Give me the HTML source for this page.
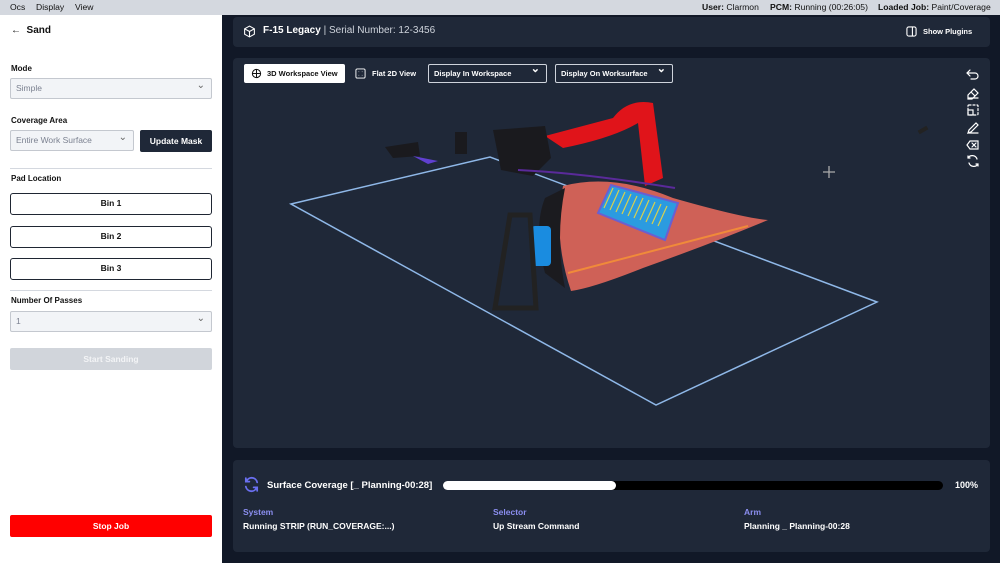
<!DOCTYPE html>
<html><head><meta charset="utf-8"><style>
*{box-sizing:border-box;margin:0;padding:0}
body{width:1000px;height:563px;overflow:hidden;font-family:"Liberation Sans",sans-serif;background:#111827;position:relative}
.top{position:absolute;left:0;top:0;width:1000px;height:15px;background:#d4d8df;font-size:8.6px;color:#111;line-height:15px}
.top span{position:absolute}
.left{position:absolute;left:0;top:15px;width:222px;height:548px;background:#fff}
.lbl{position:absolute;left:11px;font-size:8px;font-weight:bold;color:#111}
.sel{position:absolute;left:10px;height:21px;border:1px solid #c4c8cf;background:#f2f4f7;border-radius:2px;font-size:8.5px;color:#7b8190;line-height:19px;padding-left:5px}
.sel:after{content:"⌄";position:absolute;right:6px;top:-3px;font-size:10px;color:#666}
.bin{position:absolute;left:10px;width:202px;height:22px;border:1.5px solid #1f2633;border-radius:3px;font-size:8.5px;font-weight:bold;text-align:center;line-height:19px;color:#111}
.hr{position:absolute;left:10px;width:202px;height:1px;background:#d4d8df}
.card{position:absolute;background:#1f2838;border-radius:4px}
.w{color:#fff}
.dd{position:absolute;top:64px;height:19px;border:1px solid #cfd4dc;border-radius:2px;color:#fff;font-size:7.5px;font-weight:bold;line-height:17px;padding-left:5px}
.dd:after{content:"⌄";position:absolute;right:6px;top:-4px;font-size:11px}
.k{position:absolute;font-size:8.5px;font-weight:bold;color:#8b8ef0}
.v{position:absolute;font-size:8.5px;font-weight:bold;color:#fff}
</style></head><body>
<div class="top"><span style="left:10px">Ocs</span><span style="left:36px">Display</span><span style="left:75px">View</span>
<span style="left:702px"><b>User:</b> Clarmon</span><span style="left:770px"><b>PCM:</b> Running (00:26:05)</span><span style="left:878px"><b>Loaded Job:</b> Paint/Coverage</span></div>
<div class="left">
<div style="position:absolute;left:11px;top:10px;font-size:10px;font-weight:bold;color:#111">←&nbsp;&nbsp;Sand</div>
<div class="lbl" style="top:49px">Mode</div>
<div class="sel" style="top:63px;width:202px">Simple</div>
<div class="lbl" style="top:101px">Coverage Area</div>
<div class="sel" style="top:115px;width:124px">Entire Work Surface</div>
<div style="position:absolute;left:140px;top:115px;width:72px;height:22px;background:#1f2838;border-radius:2px;color:#fff;font-size:8.5px;font-weight:bold;text-align:center;line-height:22px">Update Mask</div>
<div class="hr" style="top:153px"></div>
<div class="lbl" style="top:159px">Pad Location</div>
<div class="bin" style="top:178px">Bin 1</div>
<div class="bin" style="top:211px">Bin 2</div>
<div class="bin" style="top:243px">Bin 3</div>
<div class="hr" style="top:275px"></div>
<div class="lbl" style="top:281px">Number Of Passes</div>
<div class="sel" style="top:296px;width:202px">1</div>
<div style="position:absolute;left:10px;top:333px;width:202px;height:22px;background:#d1d5db;border-radius:2px;color:#f3f4f6;font-size:8.5px;font-weight:bold;text-align:center;line-height:22px">Start Sanding</div>
<div style="position:absolute;left:10px;top:500px;width:202px;height:22px;background:#ff0000;border-radius:2px;color:#fff;font-size:8.5px;font-weight:bold;text-align:center;line-height:22px">Stop Job</div>
</div>
<div class="card" style="left:233px;top:17px;width:757px;height:30px">
<svg style="position:absolute;left:10px;top:8px" width="13" height="13" viewBox="0 0 24 24" fill="none" stroke="#fff" stroke-width="2"><path d="M12 2l9 5v10l-9 5-9-5V7z M3 7l9 5 9-5 M12 12v10"/></svg>
<div style="position:absolute;left:30px;top:8px;font-size:10px;color:#cfd4dc"><b class="w">F-15 Legacy</b> | Serial Number: 12-3456</div>
<svg style="position:absolute;left:673px;top:9px" width="11" height="11" viewBox="0 0 12 12" fill="none" stroke="#fff" stroke-width="1.2"><rect x="1" y="1" width="10" height="10" rx="2"/><path d="M7 1v10"/></svg>
<div style="position:absolute;left:690px;top:10px;font-size:7.5px;font-weight:bold;color:#fff">Show Plugins</div>
</div>
<div class="card" style="left:233px;top:58px;width:757px;height:390px"></div>
<svg style="position:absolute;left:233px;top:58px" width="757" height="390">
<polygon points="58,146 257,99 644,244 423,347" fill="none" stroke="#8fb8e8" stroke-width="1.5"/>
<path d="M380,60 Q395,40 420,45 L430,120 L412,128 L405,65 Q380,80 330,90 L312,78Z" fill="#e0141a"/>
<path d="M260,72 L312,68 L318,100 L300,118 L268,112Z" fill="#1a1a1e"/>
<path d="M285,112 Q350,115 442,130" stroke="#5a2a9a" stroke-width="2" fill="none"/>
<path d="M330,128 Q380,115 440,140 Q510,160 535,162 Q480,185 410,210 Q360,230 338,233 Q320,180 330,128Z" fill="#cf6157"/>
<path d="M335,215 L515,168" stroke="#f08a3a" stroke-width="2"/>
<polygon points="365,155 378,127 445,145 432,182" fill="#2b9be0" stroke="#6a5fd0" stroke-width="2"/>
<g stroke="#d6d050" stroke-width="1.2"><path d="M371,150L380,130M377,152L386,132M383,154L392,134M389,156L398,136M395,158L404,138M401,160L410,140M407,162L416,142M413,164L422,144M419,166L428,146M425,168L434,148"/></g>
<path d="M312,140 Q300,170 312,215 L332,230 Q322,180 332,130Z" fill="#1b1b1f"/>
<rect x="298" y="168" width="20" height="40" rx="4" fill="#1a8ce0"/>
<path d="M262,250 L277,157 L297,157 L303,250Z" fill="none" stroke="#222" stroke-width="5"/>
<path d="M152,89 L185,84 L187,98 L160,100Z" fill="#1a1a1e"/><path d="M180,98 L205,103 L195,106Z" fill="#6040d0"/>
<rect x="222" y="74" width="12" height="22" fill="#1a1a1e"/>
<rect x="685" y="70" width="10" height="4" fill="#222" transform="rotate(-30 690 72)"/>
<path d="M596,108v12M590,114h12" stroke="#aaa" stroke-width="1.3"/>
</svg>
<div style="position:absolute;left:244px;top:64px;width:101px;height:19px;background:#fff;border-radius:2px;font-size:7.5px;font-weight:bold;line-height:19px;padding-left:23px;color:#111">3D Workspace View</div>
<svg style="position:absolute;left:251px;top:68px" width="11" height="11" viewBox="0 0 24 24" fill="none" stroke="#111" stroke-width="2.2"><circle cx="12" cy="12" r="9"/><path d="M12 3v18M3 12h18"/></svg>
<svg style="position:absolute;left:355px;top:68px" width="11" height="11" viewBox="0 0 12 12" fill="none" stroke="#fff" stroke-width="1"><rect x="1" y="1" width="10" height="10" rx="1.5"/><path d="M4 4h.5M7.5 4h.5M4 8h.5M7.5 8h.5"/></svg>
<div style="position:absolute;left:372px;top:69px;font-size:7.5px;font-weight:bold;color:#fff">Flat 2D View</div>
<div class="dd" style="left:428px;width:119px">Display In Workspace</div>
<div class="dd" style="left:555px;width:118px">Display On Worksurface</div>
<svg style="position:absolute;left:966px;top:67px" width="14" height="104" viewBox="0 0 14 104" fill="none" stroke="#fff" stroke-width="1.2" stroke-linecap="round">
<path d="M4 3L1 6l3 3M1 6h8a3 3 0 010 6H5"/>
<path d="M2 28l6-6 4 4-6 6H2zM5 25l4 4M2 31h10"/>
<rect x="2" y="38" width="10" height="10" rx="1" stroke-dasharray="2 2"/><rect x="2" y="43" width="5" height="5"/>
<path d="M2 66l1-3 7-7 2 2-7 7zM2 66h10"/>
<path d="M4 74h8v8H4l-3-4z M6 76l4 4M10 76l-4 4"/>
<path d="M11 92a5 5 0 00-9-1M2 89v2h2M3 96a5 5 0 009 1M12 99v-2h-2"/>
</svg>
<div class="card" style="left:233px;top:460px;width:757px;height:92px">
<svg style="position:absolute;left:10px;top:16px" width="17" height="17" viewBox="0 0 24 24" fill="none" stroke="#6a6ff0" stroke-width="2.5" stroke-linecap="round"><path d="M20 9a8 8 0 00-15-2M4 3v5h5M4 15a8 8 0 0015 2M20 21v-5h-5"/></svg>
<div style="position:absolute;left:34px;top:20px;font-size:9.5px;font-weight:bold;color:#fff">Surface Coverage [_ Planning-00:28]</div>
<div style="position:absolute;left:210px;top:21px;width:500px;height:9px;background:#000;border-radius:5px"><div style="width:173px;height:9px;background:#fff;border-radius:5px"></div></div>
<div style="position:absolute;left:722px;top:20px;font-size:9px;font-weight:bold;color:#fff">100%</div>
<div class="k" style="left:10px;top:47px">System</div><div class="v" style="left:10px;top:61px">Running STRIP (RUN_COVERAGE:...)</div>
<div class="k" style="left:260px;top:47px">Selector</div><div class="v" style="left:260px;top:61px">Up Stream Command</div>
<div class="k" style="left:511px;top:47px">Arm</div><div class="v" style="left:511px;top:61px">Planning _ Planning-00:28</div>
</div>
</body></html>
